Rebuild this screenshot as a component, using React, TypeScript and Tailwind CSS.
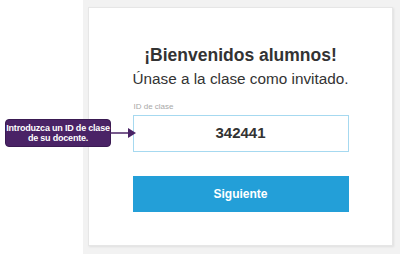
import React from 'react';

const App = () => {
  return (
    <div className="relative flex w-[400px] h-[254px] bg-white overflow-hidden" style={{ fontFamily: '"Liberation Sans", Arial, sans-serif' }}>
      <div className="w-[83px] shrink-0 bg-white" />

      <div className="flex-1 bg-[#f2f2f2] pt-[7px] pl-[5px] pr-[7px] pb-[8px] h-[254px]">
        <div className="h-full bg-white border border-[#e6e6e6] shadow-[1px_1px_2px_rgba(0,0,0,0.08)] flex flex-col items-center">
          <h1 className="mt-[36px] text-[17.5px] leading-[22px] font-bold text-[#333]">¡Bienvenidos alumnos!</h1>
          <p className="mt-[3px] text-[15.3px] leading-[20px] text-[#333]">Únase a la clase como invitado.</p>

          <div className="mt-[13px] w-[216px]">
            <label className="block text-[8px] leading-[10px] text-[#a8a8a8] pl-[1px]">ID de clase</label>
            <div className="mt-[3px] h-[37px] border border-[#a6d9f0] flex items-center justify-center">
              <span className="text-[15px] font-bold text-[#333]">342441</span>
            </div>
          </div>

          <button className="mt-[24px] w-[216px] h-[36px] bg-[#239fd8] text-white text-[12px] font-bold">
            Siguiente
          </button>
        </div>
      </div>

      {/* callout */}
      <div className="absolute left-[5px] top-[119px] flex items-center">
        <div className="w-[106px] h-[28px] rounded-[4px] bg-[#4a2366] border border-[#3a1a52] flex items-center justify-center text-center text-white text-[9px] font-bold leading-[10px] tracking-[-0.2px]">
          Introduzca un ID de clase<br />de su docente.
        </div>
        <svg width="26" height="12" viewBox="0 0 26 12" className="-ml-[1px]">
          <line x1="0" y1="6" x2="19" y2="6" stroke="#4a2366" strokeWidth="1.5" />
          <polygon points="18,1 26,6 18,11" fill="#4a2366" />
        </svg>
      </div>
    </div>
  );
};

export default App;
